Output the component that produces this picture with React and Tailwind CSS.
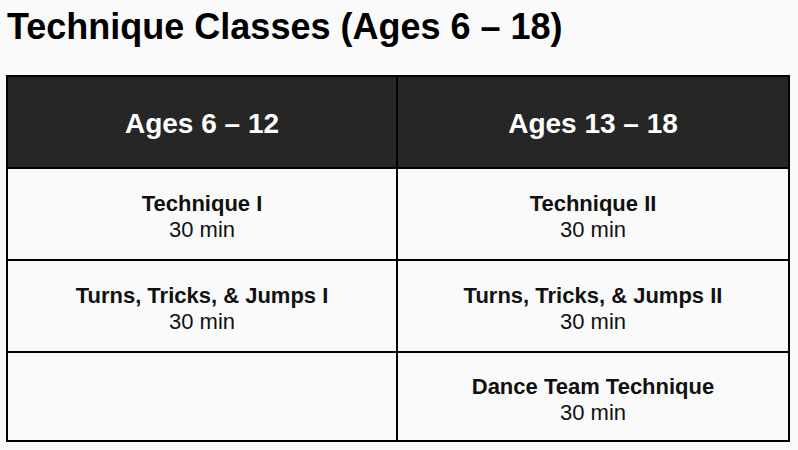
export default function App() {
  const rows = [
    [
      { name: "Technique I", time: "30 min" },
      { name: "Technique II", time: "30 min" },
    ],
    [
      { name: "Turns, Tricks, & Jumps I", time: "30 min" },
      { name: "Turns, Tricks, & Jumps II", time: "30 min" },
    ],
    [null, { name: "Dance Team Technique", time: "30 min" }],
  ]

  return (
    <div className="min-h-[450px] w-[798px] bg-[#fafafa] px-[6px] pt-[7px] font-['Liberation_Sans',Arial,sans-serif] text-black">
      <h1 className="pl-[1px] text-[36px] font-bold leading-[40px]">Technique Classes (Ages 6 – 18)</h1>

      <div className="mt-[28px] grid w-[784px] grid-cols-[388px_390px] gap-[2px] bg-black p-[2px]">
        <div className="flex h-[90px] items-center justify-center bg-[#262626] pt-[4px] text-[28px] font-bold text-white">
          Ages 6 – 12
        </div>
        <div className="flex h-[90px] items-center justify-center bg-[#262626] pt-[4px] text-[28px] font-bold text-white">
          Ages 13 – 18
        </div>

        {rows.map((row, i) =>
          row.map((cell, j) => (
            <div
              key={`${i}-${j}`}
              className={`flex flex-col items-center justify-center bg-[#fafafa] pt-[6px] text-[22px] leading-[26px] text-[#111] ${
                i === 2 ? "h-[87px]" : "h-[90px]"
              }`}
            >
              {cell && (
                <>
                  <span className="font-bold">{cell.name}</span>
                  <span>{cell.time}</span>
                </>
              )}
            </div>
          ))
        )}
      </div>
    </div>
  )
}
